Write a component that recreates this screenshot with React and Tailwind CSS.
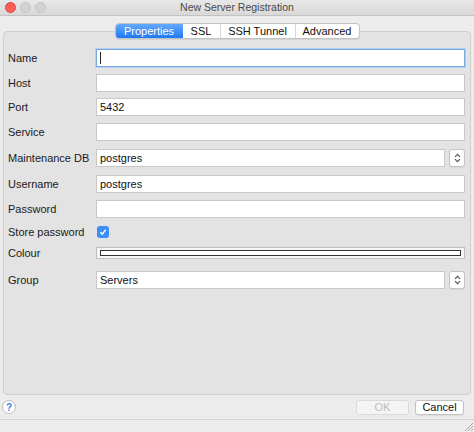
import React from 'react';

const font = { fontFamily: '"Liberation Sans", Arial, sans-serif' };

const Spinner = () => (
    <div className="w-[16px] h-[18px] ml-[4px] rounded-[3px] bg-white border border-[#c4c4c4] flex items-center justify-center shadow-[0_1px_0_rgba(0,0,0,0.05)]">
        <svg width="7" height="10" viewBox="0 0 7 10" fill="none" stroke="#555" strokeWidth="1.2">
            <path d="M1 3.8 L3.5 1.3 L6 3.8" />
            <path d="M1 6.2 L3.5 8.7 L6 6.2" />
        </svg>
    </div>
);

const Field = ({ value, focused }) => (
    <div
        className={`flex-1 h-[18px] bg-white flex items-center px-[3px] text-[11px] text-[#111] border ${focused ? 'border-[#79a8e6] shadow-[0_0_0_1px_#b5cff2]' : 'border-[#c8c8c8]'
            }`}
    >
        {focused && <div className="w-[1px] h-[12px] bg-[#222]" />}
        {value}
    </div>
);

const Row = ({ label, h, children }) => (
    <div className={`flex items-center ${h}`}>
        <div className="w-[88px] text-[11px] text-[#1a1a1a]">{label}</div>
        <div className="flex-1 flex items-center">{children}</div>
    </div>
);

const App = () => {
    const tabs = [
        { name: 'Properties', w: 'w-[67px]', active: true },
        { name: 'SSL', w: 'w-[37px]' },
        { name: 'SSH Tunnel', w: 'w-[75px]' },
        { name: 'Advanced', w: 'w-[64px]' },
    ];

    return (
        <div className="w-[474px] h-[432px] bg-[#ececec] flex flex-col overflow-hidden" style={font}>
            {/* Title bar */}
            <div className="h-[16px] grid grid-cols-[1fr_auto_1fr] items-center bg-gradient-to-b from-[#e8e8e8] to-[#d8d8d8] border-b border-[#c2c2c2]">
                <div className="flex gap-[4px] pl-[5px]">
                    <div className="w-[11px] h-[11px] rounded-full bg-[#fc5f57] border border-[#e0443e]" />
                    <div className="w-[11px] h-[11px] rounded-full bg-[#d2d2d2] border border-[#c4c4c4]" />
                    <div className="w-[11px] h-[11px] rounded-full bg-[#d2d2d2] border border-[#c4c4c4]" />
                </div>
                <div className="text-[10.5px] text-[#4a4a4a]">New Server Registration</div>
                <div />
            </div>

            {/* Body */}
            <div className="flex-1 flex flex-col pt-[7px]">
                {/* Tabs */}
                <div className="flex justify-center relative z-10">
                    <div className="flex h-[16px] rounded-[4px] border border-[#c3c3c3] bg-white overflow-hidden shadow-[0_1px_1px_rgba(0,0,0,0.08)]">
                        {tabs.map((t, i) => (
                            <div
                                key={t.name}
                                className={`${t.w} flex items-center justify-center text-[11px] ${t.active
                                        ? 'bg-gradient-to-b from-[#63a9fb] to-[#1b78f3] text-white'
                                        : 'text-[#111]'
                                    } ${i > 1 ? 'border-l border-[#d6d6d6]' : ''}`}
                            >
                                {t.name}
                            </div>
                        ))}
                    </div>
                </div>

                {/* Panel */}
                <div className="mx-[3px] -mt-[8px] h-[364px] rounded-[4px] border border-[#cfcfcf] bg-[#e3e3e3] pt-[14px] pl-[4px] pr-[5px]">
                    <Row label="Name" h="h-[24px]"><Field focused /></Row>
                    <Row label="Host" h="h-[26px]"><Field /></Row>
                    <Row label="Port" h="h-[22px]"><Field value="5432" /></Row>
                    <Row label="Service" h="h-[28px]"><Field /></Row>
                    <Row label="Maintenance DB" h="h-[24px]">
                        <Field value="postgres" />
                        <Spinner />
                    </Row>
                    <Row label="Username" h="h-[28px]"><Field value="postgres" /></Row>
                    <Row label="Password" h="h-[22px]"><Field /></Row>
                    <Row label="Store password" h="h-[24px]">
                        <div className="ml-[1px] w-[12px] h-[12px] rounded-[3px] bg-[#3b8ef6] flex items-center justify-center">
                            <svg width="8" height="8" viewBox="0 0 8 8" fill="none" stroke="white" strokeWidth="1.5">
                                <path d="M1.3 4.2 L3.2 6.1 L6.8 1.6" />
                            </svg>
                        </div>
                    </Row>
                    <Row label="Colour" h="h-[18px]">
                        <div className="flex-1 h-[12px] border border-[#bdbdbd] bg-[#f6f6f6] px-[3px] py-[2px]">
                            <div className="h-full border border-[#333] bg-white" />
                        </div>
                    </Row>
                    <Row label="Group" h="h-[36px]">
                        <Field value="Servers" />
                        <Spinner />
                    </Row>
                </div>

                {/* Footer */}
                <div className="h-[24px] flex items-center pl-[2px] pr-[10px]">
                    <div className="w-[14px] h-[14px] rounded-full bg-white border border-[#bdbdbd] flex items-center justify-center text-[10px] font-bold text-[#3b7fdc]">
                        ?
                    </div>
                    <div className="flex-1" />
                    <div className="w-[53px] h-[15px] rounded-[3px] border border-[#dadada] bg-[#f4f4f4] flex items-center justify-center text-[11px] text-[#bdbdbd]">
                        OK
                    </div>
                    <div className="ml-[6px] w-[49px] h-[15px] rounded-[3px] border border-[#c2c2c2] bg-white flex items-center justify-center text-[11px] text-[#111] shadow-[0_1px_0_rgba(0,0,0,0.06)]">
                        Cancel
                    </div>
                </div>

                {/* Bottom strip with resize grip */}
                <div className="h-[13px] border-t border-[#d4d4d4] flex justify-end items-end">
                    <svg width="12" height="12" viewBox="0 0 12 12" stroke="#a8a8a8" strokeWidth="1">
                        <path d="M11 3 L3 11" />
                        <path d="M11 6 L6 11" />
                        <path d="M11 9 L9 11" />
                    </svg>
                </div>
            </div>
        </div>
    );
};

export default App;
